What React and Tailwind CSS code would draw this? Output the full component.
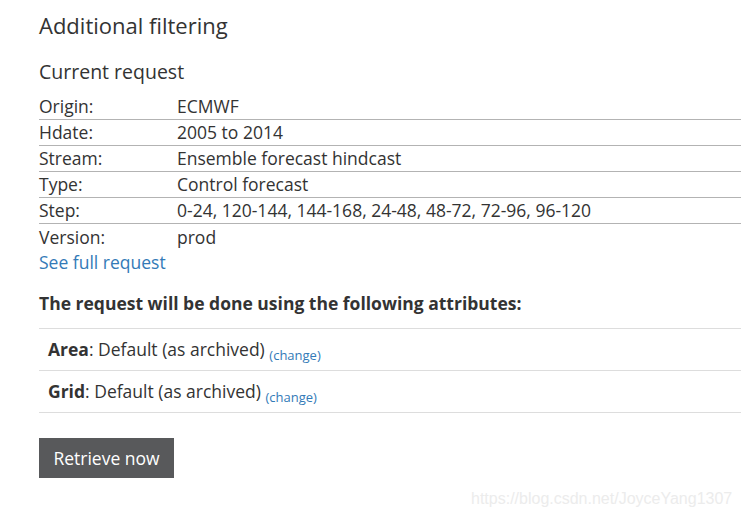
export default function App() {
  const rows = [
    ['Origin:', 'ECMWF'],
    ['Hdate:', '2005 to 2014'],
    ['Stream:', 'Ensemble forecast hindcast'],
    ['Type:', 'Control forecast'],
    ['Step:', '0-24, 120-144, 144-168, 24-48, 48-72, 72-96, 96-120'],
    ['Version:', 'prod']
  ]
  const attrs = ['Area', 'Grid']

  return (
    <div
      className="relative min-h-[518px] bg-white pl-[39px] text-[#333]"
      style={{ fontFamily: '"Open Sans", sans-serif' }}
    >
      <h1 className="pt-[8px] text-[22px] leading-[34px] font-normal">
        Additional filtering
      </h1>

      {/* Current request */}
      <h2 className="mt-[17px] text-[19.5px] leading-[26px] font-normal">
        Current request
      </h2>
      <div className="mt-[9px] divide-y divide-[#b3b3b3] text-[17.5px]">
        {rows.map(([label, value]) => (
          <div key={label} className="flex h-[26px] items-center leading-[25px]">
            <span className="w-[138px] shrink-0">{label}</span>
            <span>{value}</span>
          </div>
        ))}
      </div>
      <a href="#" className="block text-[17.5px] leading-[25px] text-[#337ab7]">
        See full request
      </a>

      {/* Attributes */}
      <p className="mt-[15px] text-[17.5px] leading-[26px] font-bold">
        The request will be done using the following attributes:
      </p>
      <div className="mt-[12px] border-t border-[#ddd] text-[17.5px]">
        {attrs.map((a) => (
          <div
            key={a}
            className="flex h-[42px] items-center border-b border-[#ddd] pl-[9px]"
          >
            <span>
              <b>{a}</b>: Default (as archived){' '}
              <a href="#" className="relative top-[4px] text-[13px] text-[#337ab7]">
                (change)
              </a>
            </span>
          </div>
        ))}
      </div>

      <button className="mt-[25px] h-[40px] w-[135px] bg-[#58595b] text-[17.5px] text-white">
        Retrieve now
      </button>

      <span
        className="absolute top-[488px] left-[471px] text-[16px] leading-[22px] text-[#ececec]"
        style={{ fontFamily: '"Liberation Sans", Arial, sans-serif' }}
      >
        https://blog.csdn.net/JoyceYang1307
      </span>
    </div>
  )
}
